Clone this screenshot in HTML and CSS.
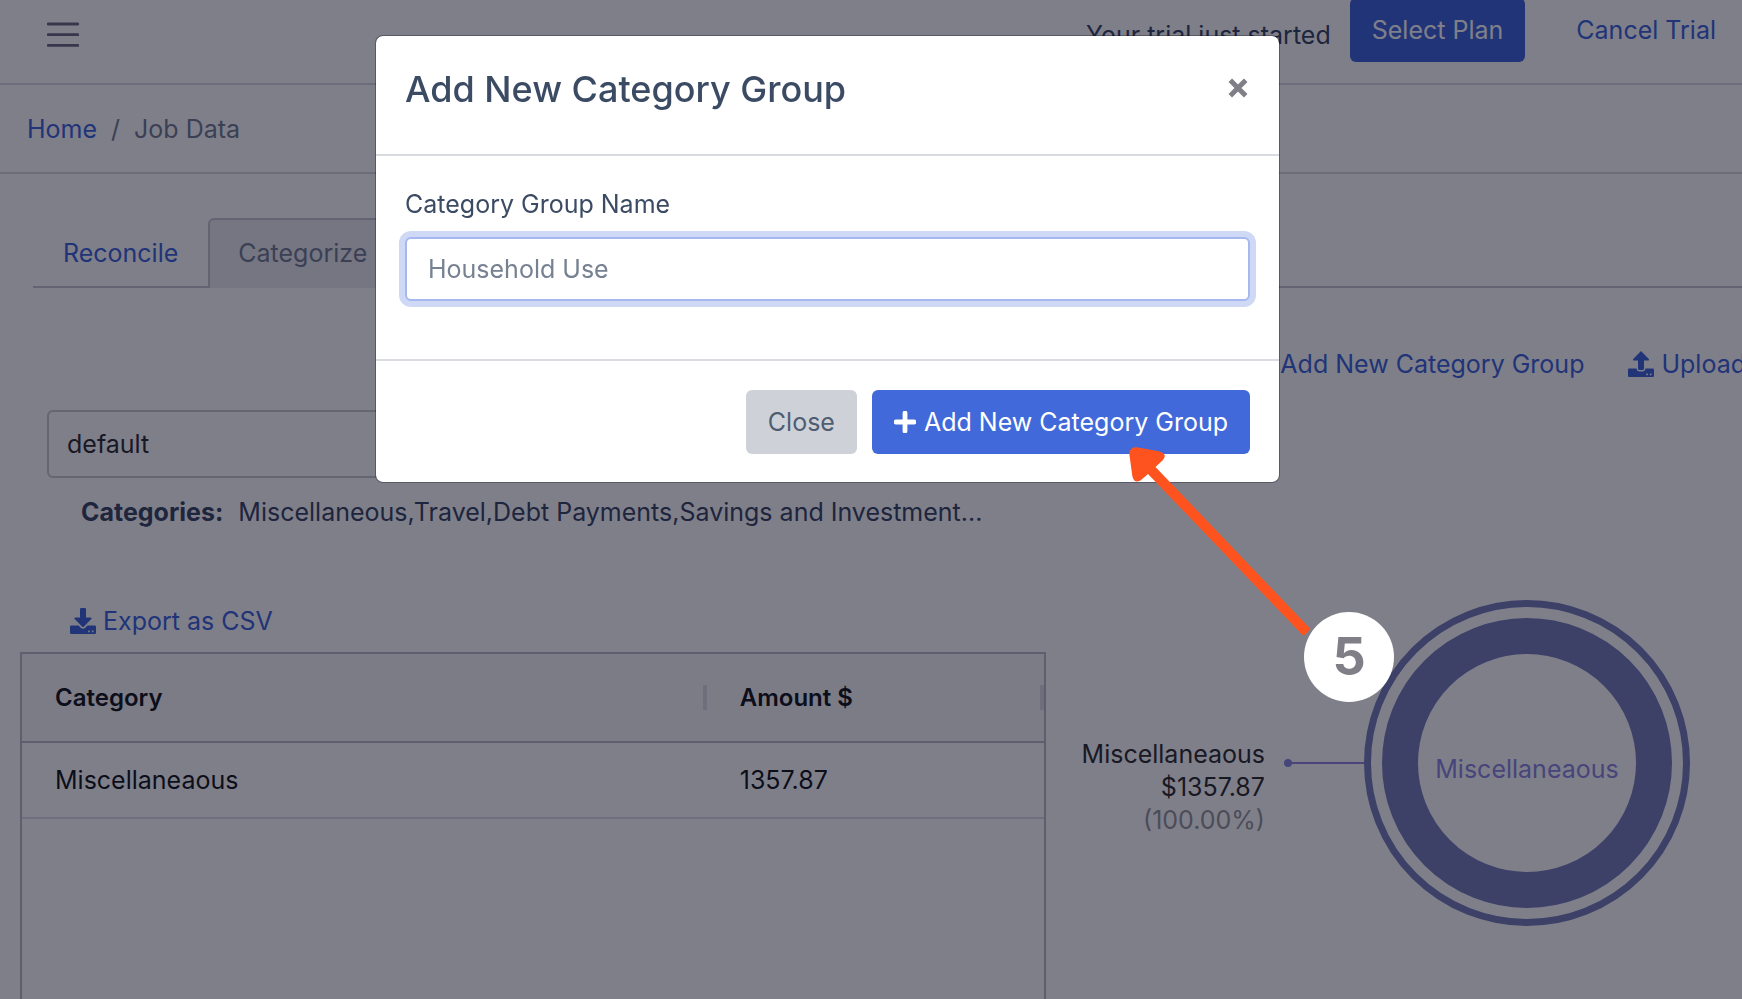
FILE: index.html
```html
<!DOCTYPE html>
<html lang="en">
<head>
<meta charset="utf-8">
<title>Job Data</title>
<link rel="stylesheet" href="styles.css">
</head>
<body>
<div class="page">
  <header class="topbar">
    <button class="menu-btn" type="button" aria-label="Toggle menu">
      <svg width="32" height="26" viewBox="0 0 32 26"><path d="M1.200 2H30.800M1.200 12.700H30.800M1.200 23.400H30.800" stroke="currentColor" stroke-width="2.800" stroke-linecap="round"/></svg>
    </button>
    <span class="trial">Your trial just started</span>
    <button class="btn btn-primary plan" type="button">Select Plan</button>
    <a class="link cancel" href="#cancel">Cancel Trial</a>
  </header>

  <nav class="breadcrumb" aria-label="Breadcrumb">
    <a class="link" href="#home">Home</a><span>/</span><span>Job Data</span>
  </nav>

  <main class="content">
    <nav class="tabs">
      <a class="tab link" href="#reconcile">Reconcile</a>
      <a class="tab tab-active" href="#categorize">Categorize</a>
    </nav>

    <div class="actions">
      <a class="link" href="#add">Add New Category Group</a>
      <a class="link icon-link" href="#upload">
        <svg class="icon" viewBox="0 0 26 26"><path fill="currentColor" fill-rule="evenodd" d="M13 0 21 8.200Q21.500 9.500 20 9.500H16V17.500Q16 19 14.500 19H11.500Q10 19 10 17.500V9.500H6Q4.500 9.500 5 8.200ZM1.300 17.500H8.500Q9 20.500 11.500 20.500H14.500Q17 20.500 17.500 17.500H24.700Q26 17.500 26 18.800V24.700Q26 26 24.700 26H1.300Q0 26 0 24.700V18.800Q0 17.500 1.300 17.500ZM18.200 22.600V24.200H19.800V22.600ZM21.900 22.600V24.200H23.500V22.600Z"/></svg>
        Upload
      </a>
    </div>

    <select class="group-select" aria-label="Category group"><option>default</option></select>
    <p class="categories"><strong>Categories:</strong><span>Miscellaneous,Travel,Debt Payments,Savings and Investment...</span></p>

    <a class="link icon-link export" href="#export">
      <svg class="icon" viewBox="0 0 26 26"><path fill="currentColor" fill-rule="evenodd" d="M11.200 0H14.800Q16 0 16 1.200V9.500H20.500Q22.500 9.500 21.300 11L14 18.500Q13 19.500 12 18.500L4.700 11Q3.500 9.500 5.500 9.500H10V1.200Q10 0 11.200 0ZM1.300 17.500H8.500L11 20Q13 21.500 15 20L17.500 17.500H24.700Q26 17.500 26 18.800V24.700Q26 26 24.700 26H1.300Q0 26 0 24.700V18.800Q0 17.500 1.300 17.500ZM18.200 22.600V24.200H19.800V22.600ZM21.900 22.600V24.200H23.500V22.600Z"/></svg>
      Export as CSV
    </a>

    <div class="report">
      <div class="grid-panel">
        <table class="grid">
          <thead><tr><th>Category</th><th>Amount $</th></tr></thead>
          <tbody><tr><td>Miscellaneaous</td><td>1357.87</td></tr></tbody>
        </table>
      </div>
      <svg class="chart" viewBox="0 0 696 346" role="img" aria-label="Spending by category">
        <g class="ring">
          <circle cx="481" cy="111" r="159.500" stroke-width="7"/>
          <circle cx="481" cy="111" r="127" stroke-width="36"/>
        </g>
        <path class="leader" d="M242 111H318"/>
        <circle class="leader-dot" cx="242" cy="111" r="4"/>
        <g text-anchor="end">
          <text class="name" x="219" y="111">Miscellaneaous</text>
          <text class="name" x="219" y="144">$1357.87</text>
          <text class="percent" x="219" y="177">(100.00%)</text>
        </g>
        <text class="center-label" x="481" y="126" text-anchor="middle">Miscellaneaous</text>
      </svg>
    </div>
  </main>
</div>

<div class="backdrop">
  <form class="modal" role="dialog" aria-modal="true" aria-labelledby="modal-title">
    <div class="modal-header">
      <h2 id="modal-title">Add New Category Group</h2>
      <button class="close" type="button" aria-label="Close dialog">
        <svg width="20" height="20" viewBox="0 0 20 20"><path d="M2.300 2.300 17.700 17.700M17.700 2.300 2.300 17.700" stroke="currentColor" stroke-width="5"/></svg>
      </button>
    </div>
    <div class="modal-body">
      <label for="group-name">Category Group Name</label>
      <input id="group-name" type="text" placeholder="Household Use">
    </div>
    <div class="modal-footer">
      <button class="btn btn-secondary" type="button">Close</button>
      <button class="btn btn-primary" type="button">
        <svg width="22" height="22" viewBox="0 0 22 22"><path d="M11 2V20M2 11H20" stroke="currentColor" stroke-width="4.800" stroke-linecap="round"/></svg>
        Add New Category Group
      </button>
    </div>
  </form>
</div>

<svg class="arrow" width="182" height="190" viewBox="0 0 182 190"><path fill="#ff531f" d="M7.500 0.200 30 4.200Q39 7 34 13L26.500 20 181.500 182 174.500 189 19 27 11.500 33.500Q5 37 3.300 29L.2 6Q1 0 7.500.2Z"/></svg>
<div class="step">5</div>
</body>
</html>
```
FILE: styles.css
```css
:root {
  --primary: #4169d9;
  --text: #3c4b64;
  --muted: #768192;
  --line: #d8dbe0;
  --grid-line: #babfc7;
}
* { box-sizing: border-box; }
body {
  margin: 0;
  height: 100vh;
  overflow: hidden;
  background: #fff;
  color: var(--text);
  font: 25px/36px Inter, "Liberation Sans", sans-serif;
}
button, input, select { font: inherit; }
.link { color: var(--primary); text-decoration: none; }
.page { height: 100vh; display: flex; flex-direction: column; overflow: hidden; }

.topbar {
  display: flex;
  align-items: flex-start;
  height: 85px;
  padding: 0 26px 0 47px;
  border-bottom: 2px solid var(--line);
}
.menu-btn { border: 0; padding: 0; margin: 22px auto 0 0; background: none; color: #6c6c84; line-height: 0; }
.trial { margin-top: 17px; }
.btn {
  display: flex;
  align-items: center;
  gap: 8px;
  height: 64px;
  padding: 0 22px;
  border: 0;
  border-radius: 6px;
}
.btn-primary { background: var(--primary); color: #fff; }
.btn-secondary { background: #ced2d8; color: #4f5d73; }
.plan { margin: -2px 51px 0 19px; }
.cancel { margin-top: 12px; }

.breadcrumb {
  display: flex;
  align-items: center;
  gap: 14px;
  height: 89px;
  padding-left: 27px;
  border-bottom: 2px solid var(--line);
  color: var(--muted);
}

.content { flex: 1; min-height: 0; display: flex; flex-direction: column; padding-top: 44px; }
.tabs { display: flex; margin-left: 33px; border-bottom: 2px solid #c4c9d0; }
.tab { padding: 15px 28px; border: 2px solid transparent; border-bottom: 0; text-decoration: none; }
.tab-active {
  margin-bottom: -2px;
  border-color: #c4c9d0;
  border-radius: 6px 6px 0 0;
  background: #ebedef;
  color: var(--muted);
}

.actions { display: flex; justify-content: flex-end; gap: 44px; margin: 58px -4px 0 0; white-space: nowrap; }
.icon-link { display: flex; align-items: center; gap: 7px; }
.icon { width: 26px; height: 26px; }
.group-select {
  appearance: none;
  width: 920px;
  height: 68px;
  margin: 28px 0 0 47px;
  padding: 0 18px;
  border: 2px solid #ccc;
  border-radius: 6px;
  background: #fff;
  color: #333;
}
.categories { display: flex; gap: 15px; margin: 16px 0 0 81px; }
.export { align-self: flex-start; margin: 73px 0 0 70px; }

.report { flex: 1; min-height: 0; display: grid; grid-template-columns: 1026fr 696fr; margin: 13px 0 0 20px; }
.grid-panel { border: 2px solid var(--grid-line); border-bottom: 0; }
.grid { width: 100%; border-collapse: collapse; color: #181d1f; text-align: left; }
.grid th, .grid td { padding: 0 33px; }
.grid th {
  height: 88px;
  border-bottom: 2px solid var(--grid-line);
  background: linear-gradient(#dddde4, #dddde4) right 50% / 4px 25px no-repeat #f8f8f8;
  font-size: 24px;
  font-weight: 600;
}
.grid th:first-child { width: 669px; }
.grid td { height: 76px; border-bottom: 2px solid #dddde8; }
.grid { table-layout: fixed; }
.grid th:first-child { width: 67%; }

.chart { width: 100%; overflow: visible; font-size: 25px; }
.ring { fill: none; stroke: #7a82bb; }
.leader { stroke: #8e8adf; stroke-width: 2; }
.leader-dot { fill: #8e8adf; }
.name { fill: #333; }
.percent { fill: #999; }
.center-label { fill: #8e8adf; }

.backdrop {
  position: fixed;
  inset: 0;
  display: flex;
  align-items: flex-start;
  justify-content: center;
  padding: 35px 87px 0 0;
  background: rgba(0, 0, 21, 0.5);
}
.modal {
  width: 100%;
  max-width: 905px;
  border: 1px solid rgba(0, 0, 21, 0.3);
  border-radius: 8px;
  background: #fff;
  background-clip: padding-box;
}
.modal-header {
  display: flex;
  justify-content: space-between;
  align-items: flex-start;
  height: 120px;
  padding: 26px 31px 0 29px;
  border-bottom: 2px solid var(--line);
}
.modal-header h2 { margin: 0; font-size: 36px; line-height: 54px; font-weight: 500; }
.close { margin-top: 16px; padding: 0; border: 0; background: none; color: #807f88; line-height: 0; }
.modal-body { height: 203px; padding: 30px 29px 0; }
.modal-body label { display: block; margin-bottom: 15px; }
.modal-body input {
  width: 100%;
  height: 64px;
  padding: 0 21px;
  border: 2px solid #a5b8f0;
  border-radius: 6px;
  outline: 0;
  box-shadow: 0 0 0 6px #cfd8f5;
  background: #fff;
  color: var(--text);
}
.modal-body input::placeholder { color: var(--muted); opacity: 1; }
.modal-footer {
  display: flex;
  justify-content: flex-end;
  gap: 15px;
  padding: 29px 29px 28px;
  border-top: 2px solid var(--line);
}

.arrow { position: absolute; left: 1129px; top: 447px; }
.step {
  position: absolute;
  left: 1304px;
  top: 612px;
  width: 90px;
  height: 90px;
  border-radius: 50%;
  background: #fff;
  color: #807f88;
  font-size: 52px;
  line-height: 90px;
  font-weight: 700;
  text-align: center;
}
```
